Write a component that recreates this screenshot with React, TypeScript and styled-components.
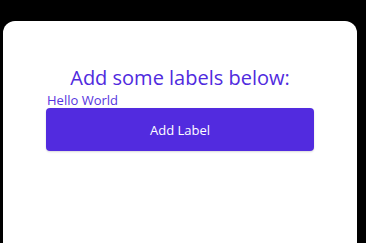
import styled, { createGlobalStyle } from 'styled-components'

const GlobalStyle = createGlobalStyle`
  html, body {
    margin: 0;
    padding: 0;
    background: #000;
    font-family: 'Open Sans', 'Noto Sans', sans-serif;
    overflow: hidden;
  }
`

const Card = styled.div`
  margin: 21px 0 0 3px;
  width: 354px;
  height: 222px;
  background: #fff;
  border-radius: 12px 12px 0 0;
  display: flex;
  justify-content: center;
`

const Content = styled.div`
  width: 268px;
  padding-top: 43px;
  display: flex;
  flex-direction: column;
`

const Heading = styled.h1`
  margin: 0;
  font-size: 20px;
  font-weight: 400;
  line-height: 28px;
  color: #4f2ade;
  text-align: center;
`

const Label = styled.span`
  font-size: 13px;
  line-height: 16px;
  color: #5634e0;
  margin-left: 1px;
`

const Button = styled.button`
  height: 43px;
  border: none;
  border-radius: 4px;
  background: #522bdf;
  color: #fff;
  font-family: inherit;
  font-size: 13px;
  box-shadow: 0 1px 2px rgba(0, 0, 0, 0.15);
  cursor: pointer;
`

export default function App() {
  const labels = ['Hello World']
  return (
    <>
      <GlobalStyle />
      <Card>
        <Content>
          <Heading>Add some labels below:</Heading>
          {labels.map((l) => (
            <Label key={l}>{l}</Label>
          ))}
          <Button>Add Label</Button>
        </Content>
      </Card>
    </>
  )
}
